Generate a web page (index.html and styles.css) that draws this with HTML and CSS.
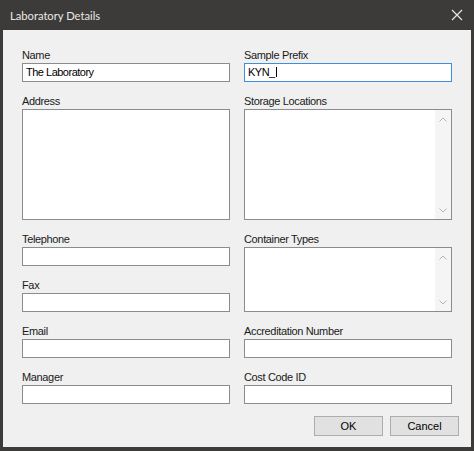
FILE: index.html
```html
<!DOCTYPE html>
<html>
<head>
<meta charset="utf-8">
<title>Laboratory Details</title>
<link rel="stylesheet" href="styles.css">
</head>
<body>
<div class="window">
  <div class="titlebar">
    <span class="title">Laboratory Details</span>
    <svg class="close" width="12" height="12" viewBox="0 0 12 12"><path d="M1 1 L11 11 M11 1 L1 11" stroke="#e6e6e6" stroke-width="1.2" fill="none"/></svg>
  </div>
  <div class="body">
    <div class="form">
      <div class="col">
        <div class="field"><div class="lbl">Name</div><div class="input">The Laboratory</div></div>
        <div class="field"><div class="lbl">Address</div><div class="area tall"></div></div>
        <div class="field"><div class="lbl">Telephone</div><div class="input"></div></div>
        <div class="field"><div class="lbl">Fax</div><div class="input"></div></div>
        <div class="field"><div class="lbl">Email</div><div class="input"></div></div>
        <div class="field"><div class="lbl">Manager</div><div class="input"></div></div>
      </div>
      <div class="col">
        <div class="field"><div class="lbl">Sample Prefix</div><div class="input focused">KYN_<span class="caret"></span></div></div>
        <div class="field"><div class="lbl">Storage Locations</div>
          <div class="area tall scroll">
            <div class="sbar">
              <svg width="8" height="5" viewBox="0 0 8 5"><path d="M0.5 4.5 L4 1 L7.5 4.5" stroke="#b4b4b4" stroke-width="1" fill="none"/></svg>
              <svg width="8" height="5" viewBox="0 0 8 5"><path d="M0.5 0.5 L4 4 L7.5 0.5" stroke="#b4b4b4" stroke-width="1" fill="none"/></svg>
            </div>
          </div>
        </div>
        <div class="field"><div class="lbl">Container Types</div>
          <div class="area short scroll">
            <div class="sbar">
              <svg width="8" height="5" viewBox="0 0 8 5"><path d="M0.5 4.5 L4 1 L7.5 4.5" stroke="#b4b4b4" stroke-width="1" fill="none"/></svg>
              <svg width="8" height="5" viewBox="0 0 8 5"><path d="M0.5 0.5 L4 4 L7.5 0.5" stroke="#b4b4b4" stroke-width="1" fill="none"/></svg>
            </div>
          </div>
        </div>
        <div class="field"><div class="lbl">Accreditation Number</div><div class="input"></div></div>
        <div class="field"><div class="lbl">Cost Code ID</div><div class="input"></div></div>
      </div>
    </div>
    <div class="buttons">
      <button class="btn">OK</button>
      <button class="btn">Cancel</button>
    </div>
  </div>
</div>
</body>
</html>
```

FILE: styles.css
```css
html, body {
  margin: 0;
  padding: 0;
}
body {
  width: 474px;
  height: 451px;
  overflow: hidden;
  font-family: "Liberation Sans", Arial, sans-serif;
  font-size: 11px;
  color: #000;
}
.window {
  width: 474px;
  height: 451px;
  display: flex;
  flex-direction: column;
  background: #3d3b39;
}
.titlebar {
  height: 30px;
  flex: none;
  display: flex;
  align-items: center;
  justify-content: space-between;
  padding: 0 11px 0 10px;
}
.title {
  font-family: Lato, "Noto Sans", sans-serif;
  font-size: 11.2px;
  color: #e8e8e8;
  margin-top: 0;
}
.close {
  display: block;
}
.body {
  flex: 1;
  margin: 0 3px 4px 3px;
  background: #f0f0f0;
  padding: 19px 12px 0 19px;
  display: flex;
  flex-direction: column;
}
.form {
  display: grid;
  grid-template-columns: 208px 208px;
  column-gap: 14px;
}
.col {
  display: flex;
  flex-direction: column;
  gap: 13px;
}
.lbl {
  line-height: 12px;
  height: 12px;
  margin-bottom: 2px;
  white-space: nowrap;
  letter-spacing: -0.35px;
  color: #1a1a1a;
}
.input {
  box-sizing: border-box;
  height: 19px;
  border: 1px solid #8c8c8c;
  background: #fff;
  padding: 0 3px;
  line-height: 17px;
  white-space: nowrap;
  letter-spacing: -0.5px;
}
.input.focused {
  border-color: #3c8fdb;
}
.caret {
  display: inline-block;
  width: 1px;
  height: 10px;
  background: #000;
  vertical-align: -1px;
  margin-left: 1px;
}
.area {
  box-sizing: border-box;
  border: 1px solid #8c8c8c;
  background: #fff;
  display: flex;
  justify-content: flex-end;
}
.area.tall {
  height: 111px;
}
.area.short {
  height: 65px;
}
.sbar {
  width: 16px;
  background: #f5f5f5;
  display: flex;
  flex-direction: column;
  justify-content: space-between;
  align-items: center;
  padding: 7px 0 6px;
}
.sbar svg {
  display: block;
}
.buttons {
  display: flex;
  justify-content: flex-end;
  gap: 7px;
  margin-top: 12px;
}
.btn {
  width: 69px;
  height: 20px;
  box-sizing: border-box;
  border: 1px solid #adadad;
  background: #e1e1e1;
  font-family: "Liberation Sans", Arial, sans-serif;
  font-size: 11px;
  color: #000;
  padding: 0;
  margin: 0;
}
```
